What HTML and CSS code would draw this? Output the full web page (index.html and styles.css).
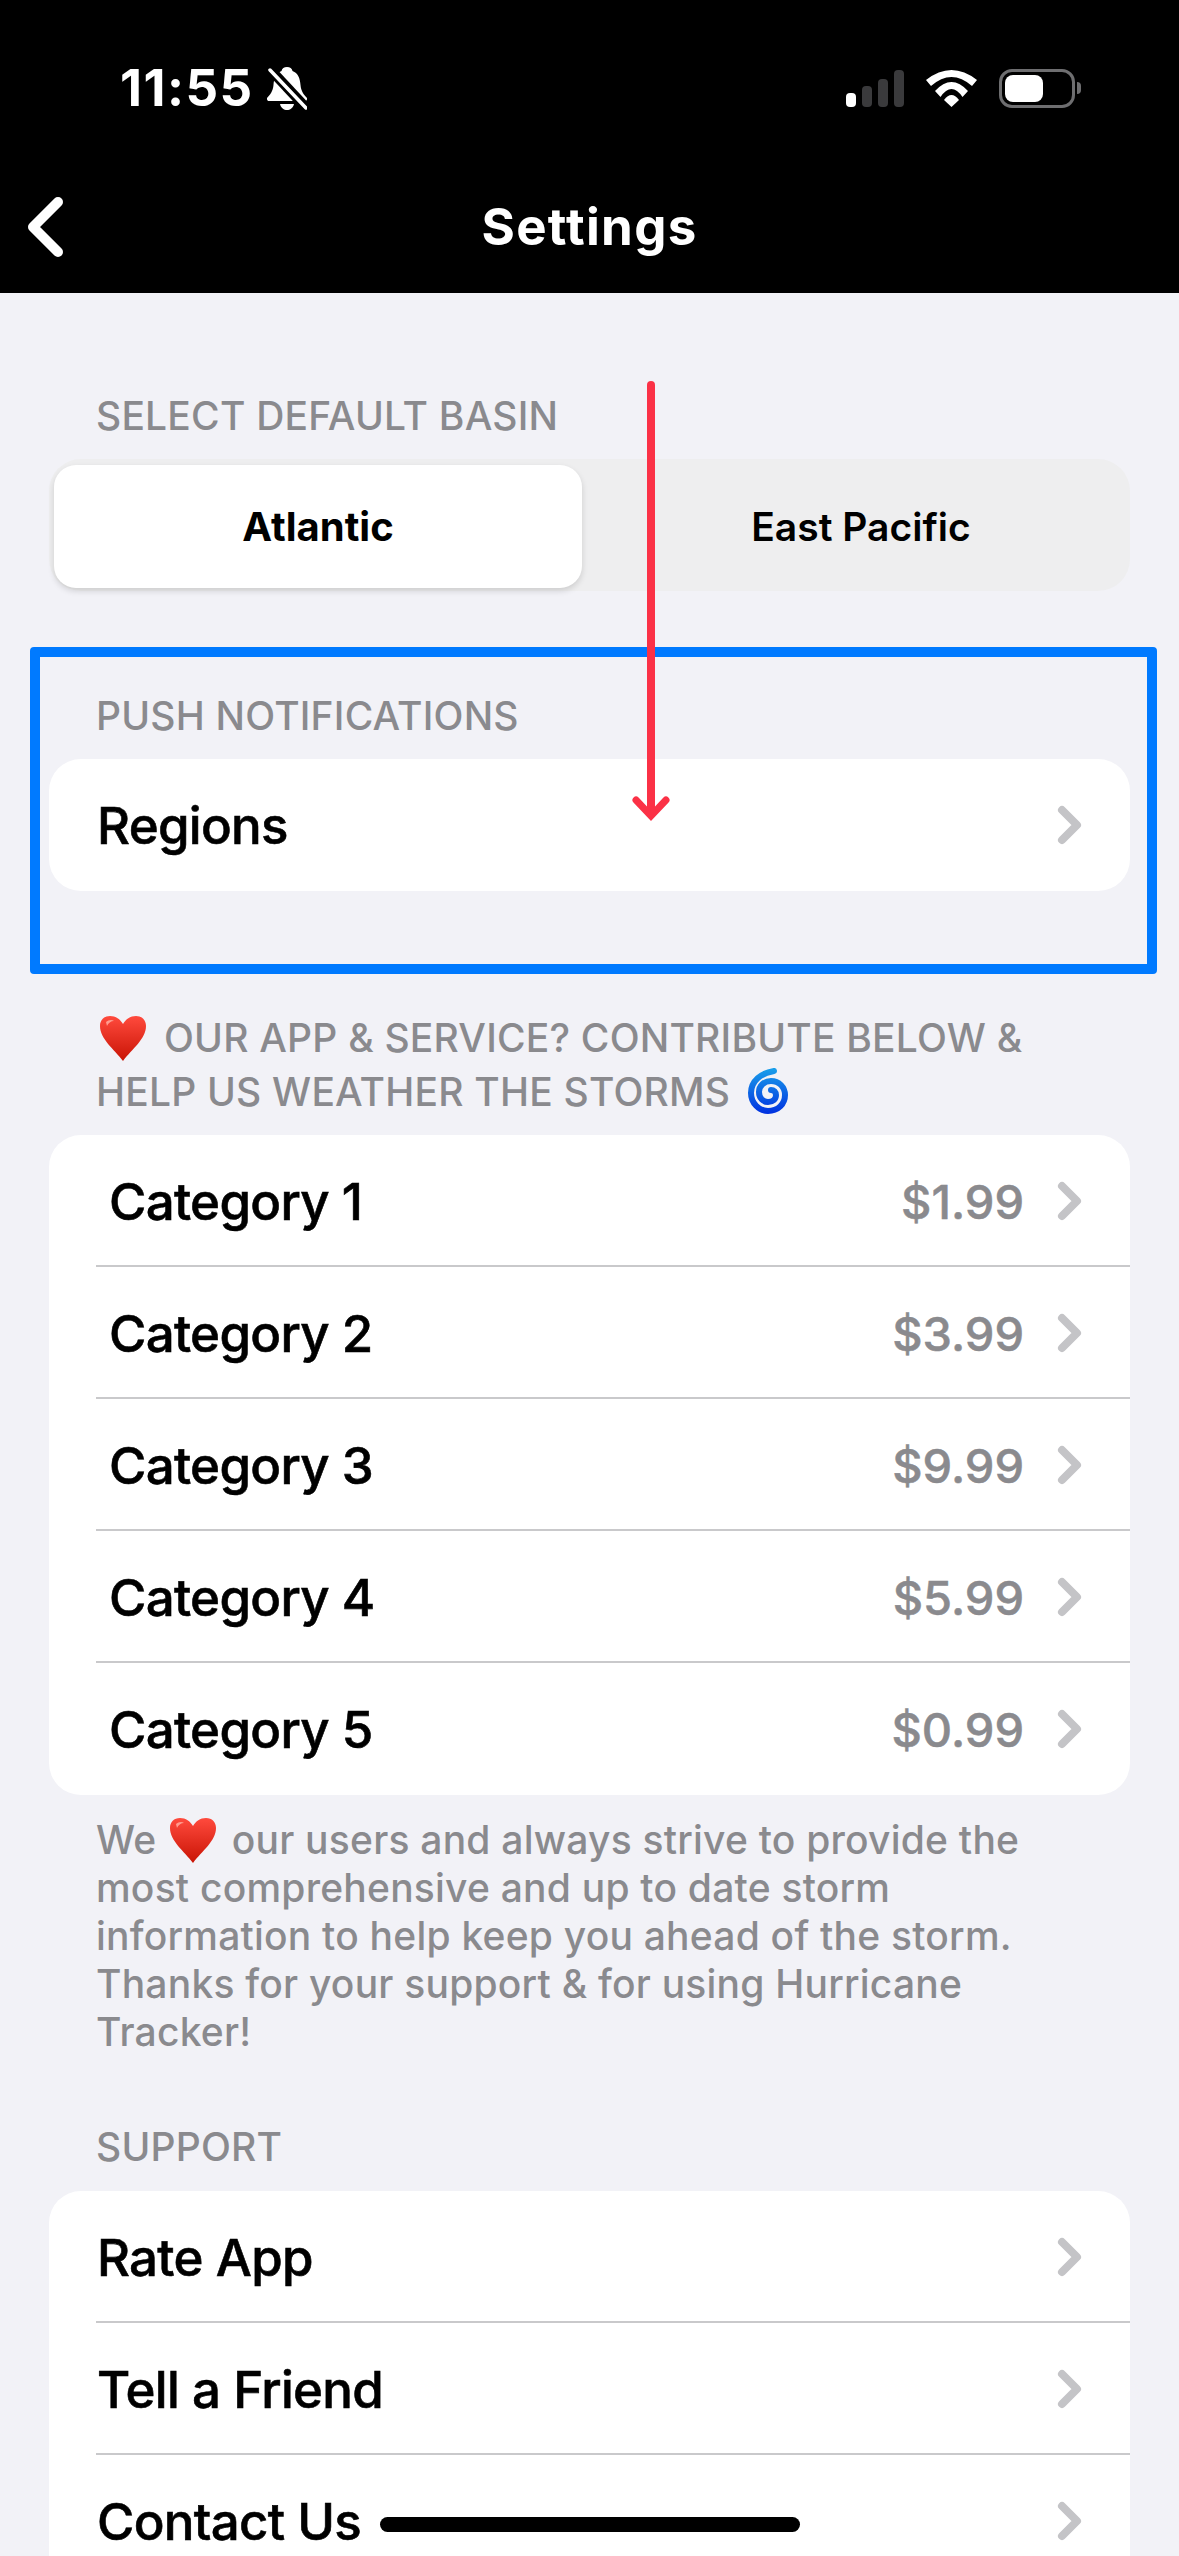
FILE: index.html
```html
<!DOCTYPE html>
<html lang="en">
  <head>
    <meta charset="UTF-8" />
    <meta name="viewport" content="width=device-width, initial-scale=1.0" />
    <link rel="stylesheet" href="styles.css">
    <title>Settings</title>
  </head>
  <body>
    <svg class="defs" width="0" height="0">
      <defs>
        <linearGradient id="heartFill" x1="0" y1="0" x2="0" y2="1">
          <stop offset="0" stop-color="#ff4a3d"/>
          <stop offset="1" stop-color="#c91405"/>
        </linearGradient>
        <linearGradient id="spiralFill" gradientUnits="userSpaceOnUse" x1="0" y1="0" x2="0" y2="46">
          <stop offset="0" stop-color="#1aa0ea"/>
          <stop offset="1" stop-color="#0030e0"/>
        </linearGradient>
      </defs>
    </svg>
    <div class="screen">
      <div class="top">
        <div class="status">
          <div class="status-left">
            <span class="time">11:55</span>
            <svg class="bell" viewBox="0 0 40 43" width="40" height="43">
              <path d="M20 0C23 0 25 1.500 25.500 4 31 6 33 11 33.500 18 34 24 37 28 40 31V32C40 33.500 39 34 38 34H2C1 34 0 33.500 0 32V31C3 28 6 24 6.500 18 7 11 9 6 14.500 4 15 1.500 17 0 20 0z" fill="#fff"/>
              <path d="M13 37H27C26 41 23 43 20 43S14 41 13 37z" fill="#fff"/>
              <path d="M1 0L42 44" stroke="#000" stroke-width="10"/>
              <path d="M3 3L39 41" stroke="#fff" stroke-width="3.500" stroke-linecap="round"/>
            </svg>
          </div>
          <div class="status-right">
            <div class="signal">
              <i class="bar bar-1"></i><i class="bar bar-2"></i><i class="bar bar-3"></i><i class="bar bar-4"></i>
            </div>
            <svg class="wifi" viewBox="0 0 51 37" width="51" height="37">
              <path d="M0 10Q25.500 -10 51 10L46 16Q25.500 -2 5 16z" fill="#fff"/>
              <path d="M9 21Q25.500 3 42 21L36.500 27Q25.500 11 14.500 27z" fill="#fff"/>
              <path d="M25.500 37L18 30Q25.500 20 33 30z" fill="#fff"/>
            </svg>
            <div class="battery"><div class="battery-fill"></div></div>
            <div class="battery-cap"></div>
          </div>
        </div>
        <div class="nav">
          <svg class="back" viewBox="0 0 38 62" width="38" height="62">
            <path d="M32 6L7 31l25 25" fill="none" stroke="#fff" stroke-width="10" stroke-linecap="round" stroke-linejoin="round"/>
          </svg>
          <h1 class="nav-title">Settings</h1>
        </div>
      </div>

      <div class="content">
        <h2 class="section-head">SELECT DEFAULT BASIN</h2>
        <div class="segment">
          <div class="seg-item seg-active">Atlantic</div>
          <div class="seg-item seg-other">East Pacific</div>
        </div>

        <h2 class="section-head head-push">PUSH NOTIFICATIONS</h2>
        <div class="card">
          <div class="row"><span class="row-label">Regions</span><svg class="chev" viewBox="0 0 26 40" width="26" height="40"><path d="M5 5l15 15L5 35" /></svg></div>
        </div>

        <h2 class="section-head head-contribute">
          <svg class="heart heart-big" viewBox="0 0 48 46" width="48" height="46">
            <path d="M24 46C15 34 1 24 1 11 1 5 5 1 11 1c6 0 10 3 13 8 3-5 7-8 13-8 6 0 10 4 10 10 0 13-14 23-23 35z" fill="url(#heartFill)"/>
            <path d="M7 7c2-2 6-3 8-1-3 0-6 2-7 5z" fill="#ff9d90"/>
          </svg>
          <span class="after-heart">OUR APP &amp; SERVICE? CONTRIBUTE BELOW &amp;</span><br />HELP US WEATHER THE STORMS
          <svg class="cyclone" viewBox="0 0 42 46" width="42" height="46">
            <path d="M27 3C14 5 4 13 4 25c0 10 8 18 17 18 10 0 17-7 17-16 0-8-6-14-14-14-7 0-12 5-12 11 0 6 4 10 9 10 5 0 8-3 8-7 0-3-2-5-5-5" fill="none" stroke="url(#spiralFill)" stroke-width="6" stroke-linecap="round"/>
          </svg>
        </h2>
        <div class="card">
          <div class="row row-cat"><span class="row-label">Category 1</span><span class="price">$1.99</span><svg class="chev" viewBox="0 0 26 40" width="26" height="40"><path d="M5 5l15 15L5 35" /></svg></div>
          <div class="row row-cat"><span class="row-label">Category 2</span><span class="price">$3.99</span><svg class="chev" viewBox="0 0 26 40" width="26" height="40"><path d="M5 5l15 15L5 35" /></svg></div>
          <div class="row row-cat"><span class="row-label">Category 3</span><span class="price">$9.99</span><svg class="chev" viewBox="0 0 26 40" width="26" height="40"><path d="M5 5l15 15L5 35" /></svg></div>
          <div class="row row-cat"><span class="row-label">Category 4</span><span class="price">$5.99</span><svg class="chev" viewBox="0 0 26 40" width="26" height="40"><path d="M5 5l15 15L5 35" /></svg></div>
          <div class="row row-cat"><span class="row-label">Category 5</span><span class="price">$0.99</span><svg class="chev" viewBox="0 0 26 40" width="26" height="40"><path d="M5 5l15 15L5 35" /></svg></div>
        </div>
        <p class="foot">We
          <svg class="heart" viewBox="0 0 48 46" width="48" height="46">
            <path d="M24 46C15 34 1 24 1 11 1 5 5 1 11 1c6 0 10 3 13 8 3-5 7-8 13-8 6 0 10 4 10 10 0 13-14 23-23 35z" fill="url(#heartFill)"/>
            <path d="M7 7c2-2 6-3 8-1-3 0-6 2-7 5z" fill="#ff9d90"/>
          </svg>
          our users and always strive to provide the<br />most comprehensive and up to date storm<br />information to help keep you ahead of the storm.<br />Thanks for your support &amp; for using Hurricane<br />Tracker!</p>

        <h2 class="section-head head-support">SUPPORT</h2>
        <div class="card">
          <div class="row"><span class="row-label">Rate App</span><svg class="chev" viewBox="0 0 26 40" width="26" height="40"><path d="M5 5l15 15L5 35" /></svg></div>
          <div class="row"><span class="row-label">Tell a Friend</span><svg class="chev" viewBox="0 0 26 40" width="26" height="40"><path d="M5 5l15 15L5 35" /></svg></div>
          <div class="row"><span class="row-label">Contact Us</span><svg class="chev" viewBox="0 0 26 40" width="26" height="40"><path d="M5 5l15 15L5 35" /></svg></div>
        </div>
      </div>

      <!-- annotations on top of the screenshot -->
      <div class="note-box"></div>
      <svg class="note-arrow" viewBox="0 0 40 450" width="40" height="450">
        <path d="M20 6V434" fill="none" stroke="#fb3146" stroke-width="8" stroke-linecap="round"/>
        <path d="M5 421L20 437 35 421" fill="none" stroke="#fb3146" stroke-width="7" stroke-linecap="round"/>
      </svg>
      <div class="home-bar"></div>
    </div>
  </body>
</html>
```
FILE: styles.css
```css
body {
  margin: 0;
  font-family: Inter, "Liberation Sans", sans-serif;
  background: #f2f2f7;
}

.defs {
  position: absolute;
}

.screen {
  position: relative;
  width: 1179px;
  height: 2556px;
  overflow: hidden;
  background: #f2f2f7;
}

/* top black area */
.top {
  height: 293px;
  background: #000;
  color: #fff;
}
.status {
  height: 175px;
  padding: 66px 98px 0 120px;
  box-sizing: border-box;
  display: flex;
  justify-content: space-between;
  align-items: flex-start;
}
.status-left {
  display: flex;
  align-items: center;
  gap: 13px;
}
.time {
  font-size: 51px;
  font-weight: 700;
  line-height: 44px;
  letter-spacing: 1.5px;
}
.status-right {
  display: flex;
  align-items: center;
  height: 44px;
}
.signal {
  display: flex;
  align-items: flex-end;
  gap: 6px;
  height: 37px;
  margin-right: 22px;
}
.bar {
  display: block;
  width: 10px;
  border-radius: 4px;
  background: #3a3a3c;
}
.bar-1 { height: 14px; background: #fff; }
.bar-2 { height: 21px; }
.bar-3 { height: 28px; }
.bar-4 { height: 37px; }
.wifi {
  margin-right: 22px;
}
.battery {
  width: 76px;
  height: 39px;
  box-sizing: border-box;
  border: 3px solid #6e6e70;
  border-radius: 13px;
  padding: 3px;
}
.battery-fill {
  width: 38px;
  height: 100%;
  background: #fff;
  border-radius: 8px;
}
.battery-cap {
  width: 4px;
  height: 12px;
  margin-left: 2px;
  background: #6e6e70;
  border-radius: 0 6px 6px 0;
}

.nav {
  position: relative;
  height: 118px;
  box-sizing: border-box;
  padding-bottom: 16px;
  display: flex;
  align-items: center;
  justify-content: center;
}
.nav-title {
  margin: 0;
  font-size: 51px;
  font-weight: 700;
  letter-spacing: 1.3px;
}
.back {
  position: absolute;
  left: 26px;
  top: 21px;
}

/* settings list */
.content {
  padding: 0 49px;
}
.section-head {
  margin: 0;
  padding-left: 47px;
  font-size: 39px;
  font-weight: 500;
  line-height: 54px;
  letter-spacing: 0.2px;
  color: #8a8a8e;
}
.content > .section-head:first-child {
  margin-top: 96px;
}
.head-push {
  margin-top: 98px;
}
.head-contribute {
  margin-top: 120px;
  position: relative;
}
.head-support {
  margin-top: 64px;
}
.head-contribute + .card,
.head-push + .card {
  margin-top: 16px;
}
.head-support + .card {
  margin-top: 17px;
}

.segment {
  margin-top: 16px;
  height: 132px;
  display: flex;
  box-sizing: border-box;
  padding: 6px 0 3px 5px;
  background: #eeeeef;
  border-radius: 32px;
}
.seg-item {
  display: flex;
  align-items: center;
  justify-content: center;
  font-size: 39px;
  font-weight: 600;
  color: #000;
}
.seg-active {
  width: 528px;
  font-size: 40px;
  font-weight: 700;
  background: #fff;
  border-radius: 22px;
  box-shadow: 0 3px 6px rgba(0, 0, 0, 0.14);
}
.seg-other {
  flex: 1;
  padding-left: 10px;
}

.card {
  background: #fff;
  border-radius: 32px;
  overflow: hidden;
}
.row {
  position: relative;
  height: 132px;
  padding: 0 47px 0 48px;
  display: flex;
  align-items: center;
}
.row-cat {
  padding-left: 60px;
}
.row + .row::before {
  content: "";
  position: absolute;
  top: -2px;
  left: 47px;
  right: 0;
  height: 2px;
  background: #c9c9cb;
}
.row-label {
  flex: 1;
  font-size: 51px;
  font-weight: 500;
  letter-spacing: -0.7px;
  -webkit-text-stroke: 0.6px #000;
  color: #000;
}
.price {
  font-size: 47px;
  font-weight: 500;
  -webkit-text-stroke: 0.5px #8a8a8e;
  color: #8a8a8e;
  margin-right: 33px;
}
.chev {
  fill: none;
  stroke: #c4c4c7;
  stroke-width: 8;
  stroke-linecap: round;
  stroke-linejoin: round;
}

.foot {
  margin: 21px 0 0;
  padding-left: 47px;
  font-size: 39px;
  font-weight: 500;
  line-height: 48px;
  letter-spacing: 0.22px;
  color: #8a8a8e;
}
.heart {
  vertical-align: -9px;
  margin: 0 4px 0 2px;
}
.heart-big {
  position: absolute;
  left: 50px;
  top: 4px;
  margin: 0;
}
.after-heart {
  margin-left: 68px;
}
.cyclone {
  vertical-align: -8px;
  margin-left: 6px;
}

/* annotations */
.note-box {
  position: absolute;
  left: 30px;
  top: 647px;
  width: 1127px;
  height: 327px;
  box-sizing: border-box;
  border: 10px solid #007aff;
  border-radius: 4px;
}
.note-arrow {
  position: absolute;
  left: 631px;
  top: 379px;
}
.home-bar {
  position: absolute;
  left: 380px;
  top: 2517px;
  width: 420px;
  height: 15px;
  border-radius: 8px;
  background: #000;
}
```
